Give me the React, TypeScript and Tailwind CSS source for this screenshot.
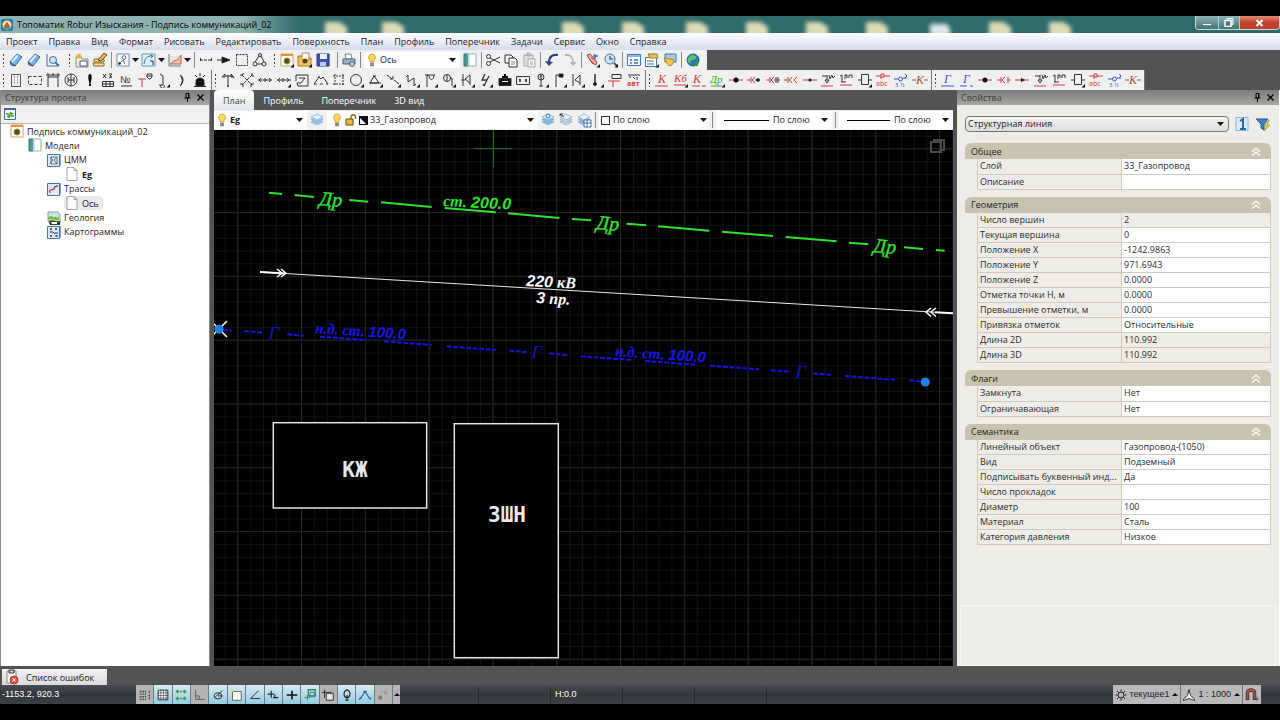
import { useState } from 'react'
import type { ReactNode } from 'react'

type Tool = [label: string, art: ReactNode]

const RED = '#d23a3a'
const BLUE = '#3c50c8'

function Icon({ children }: { children: ReactNode }) {
  return (
    <svg className="h-4 w-4 shrink-0" viewBox="0 0 16 16" fill="none" stroke="#333" strokeWidth="1">
      {children}
    </svg>
  )
}

const corner = <path d="M15 12v3.500h-3.500z" fill="#111" stroke="none" />

function Letter({ t, c, x = 2, y = 12, s = 12 }: { t: string; c: string; x?: number; y?: number; s?: number }) {
  return (
    <text x={x} y={y} fontSize={s} fill={c} stroke="none" fontStyle="italic" fontFamily="Liberation Serif, serif">
      {t}
    </text>
  )
}

function ToolButton({ tool }: { tool: Tool }) {
  return (
    <button type="button" aria-label={tool[0]} className="flex h-4 w-4 shrink-0 items-center justify-center hover:bg-sky-100">
      <Icon>{tool[1]}</Icon>
    </button>
  )
}

function Handle() {
  return (
    <svg className="h-4 w-1 shrink-0" viewBox="0 0 4 16" fill="#444">
      <path d="M1 2h1v2H1zM1 6h1v2H1zM1 10h1v2H1zM1 14h1v1H1z" />
    </svg>
  )
}

function Sep() {
  return <span className="mx-px h-4 w-px shrink-0 bg-[#8b8b8b]" />
}

function Caret() {
  return (
    <svg className="pointer-events-none h-[4px] w-[7px] shrink-0" viewBox="0 0 7 4" fill="#111">
      <path d="M0 0h7L3.500 4z" />
    </svg>
  )
}

const bulb = (
  <>
    <path d="M8 2a3.500 3.500 0 0 0-2 6.300V10h4V8.300A3.500 3.500 0 0 0 8 2z" fill="#ffd75e" stroke="#d9a62c" />
    <path d="M6.500 11h3v3h-3z" fill="#8a8a8a" stroke="#666" strokeWidth=".5" />
  </>
)

const eraser = (
  <>
    <path d="M2 10l7-8 5 3-7 9-4-1z" fill="#79b2e0" stroke="#2f6ea8" />
    <path d="M4 10l6-7" stroke="#d9edfb" strokeWidth="2" />
    <path d="M2 10l5 4" stroke="#1f4f80" />
  </>
)

const bookArt = (
  <>
    <path d="M2 2h4v12H2z" fill="#4d9a9a" stroke="#2f7272" />
    <path d="M6 2h8v12H6z" fill="#fff" stroke="#8fb0b8" />
    <path d="M7 3v10" stroke="#9fd0d0" />
  </>
)

const layers = (color: string) => (
  <>
    <path d="M2 10l6 3 6-3-6-3z" fill={color} stroke="#7fa9cf" strokeWidth=".7" />
    <path d="M2 7.500l6 3 6-3-6-3z" fill={color} stroke="#7fa9cf" strokeWidth=".7" />
    <path d="M2 5l6 3 6-3-6-3z" fill="#e4f2fb" stroke="#7fa9cf" strokeWidth=".7" />
  </>
)

const projectArt = (
  <>
    <path d="M2 2h12v12H2z" fill="#fff" stroke="#c9a860" />
    <path d="M2 2h12v2H2z" fill="#e5923b" stroke="none" />
    <circle cx="8" cy="9" r="3" fill="#5a4a1c" stroke="#8a9a3c" />
  </>
)

const fileTools: Tool[] = [
  ['Выделение', eraser],
  ['Снять выделение', eraser],
  ['Показать', <><path d="M3 2v12h11" stroke="#4a6c9c" /><circle cx="9" cy="8" r="3.500" fill="#cfe6f7" stroke="#3b6ea5" /><path d="M11.500 10.500L15 14" stroke="#3b6ea5" strokeWidth="2" /></>],
]

const folderTools: Tool[] = [
  ['Новый лист', <><path d="M2 5h5l1 2h6v8H2z" fill="#f6efc9" stroke="#7c8a9a" /><path d="M6 9h7v5H6z" fill="#fff" stroke="#557" /><path d="M5 1v6M2 4h6M3 2l4 4M7 2L3 6" stroke="#f0a92a" /></>],
  ['Правка листа', <><path d="M2 7h10v3H2zM1 11h11v3H2z" fill="#f6d890" stroke="#8a6a30" /><path d="M6 8l6-7 3 2-6 6z" fill="#f4b24a" stroke="#6a4a20" /></>],
]

const surfaceTools: Tool[] = [
  ['Точки', <><path d="M2 2h12v12H2z" fill="#fff" stroke="#6d8db5" /><circle cx="9" cy="5.500" r="1.800" stroke="#4c6d9c" /><path d="M8.500 7.500L5 11M8.500 8l1 4" stroke="#4c6d9c" /><circle cx="4.500" cy="11.500" r="1" fill="#333" /></>],
  ['Трасса', <><path d="M1 2h13v12H1z" fill="#dff1f8" stroke="#5b9fb8" /><path d="M3 12c1-6 3-8 8-8M9 3l3 1-2 2" stroke="#2c7f9c" /><path d="M9 9h3v4" stroke="#333" /></>],
  ['Профиль', <><path d="M2 2v12h12" stroke="#777" /><path d="M3 12l4-3 3-1 4-5v9z" fill="#f5c0b4" stroke="#c05a48" /><path d="M3 5h10M3 8h10" stroke="#bbb" strokeWidth=".5" /></>],
]

const drawTools: Tool[] = [
  ['Отрезок', <path d="M2 8h12M2.500 6v4M13.500 6v4" strokeDasharray="3 1" />],
  ['Стрелка', <><path d="M1 8h6" /><path d="M6 5l8 3-8 3z" fill="#111" /></>],
  ['Рамка', <path d="M2.500 2.500h11v11h-11z" strokeDasharray="2 1" />],
  ['Узлы', <><circle cx="8" cy="3" r="1.500" /><circle cx="3" cy="12" r="2" /><circle cx="12" cy="12" r="2" /><path d="M7 4L3 10M9 4l3 6M5 12h5" /></>],
]

const saveTools: Tool[] = [
  ['Новый проект', <>{projectArt}{corner}</>],
  ['Открыть проект', <><path d="M1 4h5l1 2h7v8H1z" fill="#f4c55c" stroke="#a97a1c" /><path d="M5 1h7v7H5z" fill="#fff" stroke="#b48a3c" /><circle cx="8" cy="9" r="2.500" fill="#5a4a1c" stroke="none" />{corner}</>],
  ['Сохранить', <><path d="M2 2h12v12H2z" fill="#3e52a8" stroke="#27357a" /><path d="M5 2h7v5H5z" fill="#e9eefb" stroke="none" /><path d="M5 10h6v4H5z" fill="#bcc8ec" stroke="none" /></>],
]

const clipTools: Tool[] = [
  ['Вырезать', <><circle cx="3.500" cy="4.500" r="2" /><circle cx="3.500" cy="11.500" r="2" /><path d="M5 6l10 5M5 10l10-5" /></>],
  ['Копировать', <><path d="M2 3h6l2 2v6H2z" fill="#f6f6f6" /><path d="M6 6h6l2 2v7H6z" fill="#fff" /><path d="M8 10h4M8 12h4" stroke="#888" /></>],
  ['Вставить', <g stroke="#a8a8a8"><path d="M3 3h9v11H3zM6 1h3v3H6z" fill="#e0e0e0" /><path d="M7 7h7v8H7z" fill="#f4f4f4" /><path d="M9 10h3M9 12h3" /></g>],
]

const undoTools: Tool[] = [
  ['Отменить', <><path d="M14 3C8 2 5 5 5 11" stroke="#23457e" strokeWidth="2.200" /><path d="M1 9l4 5 4-4z" fill="#23457e" stroke="none" /></>],
  ['Вернуть', <><path d="M3 3c6-1 8 3 8 8" stroke="#b4b4b4" strokeWidth="1.800" /><path d="M8 10l3 4 4-4z" fill="#b4b4b4" stroke="none" /></>],
]

const viewTools: Tool[] = [
  ['Панорама', <><path d="M2 3l3-1 7 8-1 3-4-2z" fill="#e9b0a4" stroke="#a4463c" /><path d="M4 7l5 5M6 5l5 4" stroke="#a4463c" /><path d="M10 2v5M8 4h5" stroke="#3b6ea5" strokeWidth="1.500" />{corner}</>],
  ['Масштаб', <><circle cx="7" cy="7" r="5" fill="#cfe3f2" stroke="#44739c" /><path d="M7 4v3h3" stroke="#44739c" strokeWidth="1.500" /><path d="M11 11l3 3" stroke="#2f5680" strokeWidth="2" />{corner}</>],
]

const windowTools: Tool[] = [
  ['Свойства', <><path d="M1.500 2.500h13v11h-13z" fill="#fff" stroke="#3b78b8" /><path d="M2 3h12v2H2z" fill="#8dbbe6" stroke="none" /><path d="M4 8h2M4 11h2M8 8h4M8 11h4" stroke="#3b78b8" strokeWidth="1.500" /></>],
  ['Параметры', <><path d="M1.500 5.500h11v9h-11z" fill="#fff" stroke="#3b78b8" /><path d="M4 2h9l1 4H6z" fill="#e9c25a" stroke="#a17a1c" /><path d="M3 9h7M3 12h7" stroke="#3b78b8" />{corner}</>],
  ['Выбор', <><path d="M3 2h11v8H3z" fill="#a9c8ea" stroke="#3b78b8" /><path d="M2 6l5 8 3-1 2-5-4-1z" fill="#f3c84c" stroke="#b58a1c" /></>],
]

const printer: Tool = ['Печать', <><path d="M4 2h6l1 5H5z" fill="#fff" stroke="#789" /><path d="M2 7h12v5H2z" fill="#9db0c8" stroke="#4d6284" /><circle cx="11" cy="12" r="2.500" fill="#b8cfe8" stroke="#4d6284" /></>]

const globe: Tool = ['Справка в сети', <><circle cx="8" cy="8" r="6" fill="#2b78c0" stroke="#1c5a94" /><path d="M4 5c3-3 6-2 7 0s-2 3-4 3-1 4-3 3-2-4 0-6z" fill="#5fc46a" stroke="none" /><path d="M9 10h4v4H9z" fill="#2f9c3c" stroke="none" /></>]

const row2a: Tool[] = [
  ['Здание', <path d="M3.500 2.500h9v12h-9zM6 5h1M9 5h1M6 8h1M9 8h1M6 11h1M9 11h1" stroke="#555" />],
  ['Контур', <path d="M1.500 4.500h13v8h-13z" strokeDasharray="3 2" />],
  ['Площадка', <><path d="M3 15V5h10v10M1 3h14M3 1v4M8 1v3M13 1v4" /></>],
  ['Колодец', <><circle cx="8" cy="8" r="6" /><path d="M8 2v12M5 5v6M11 5v6M5 8h6" /></>],
  ['Знак', <path d="M8 2c2.500 0 2 4 .5 10h-1C6 6 5.500 2 8 2zM7 12h2v2H7z" fill="#111" stroke="none" />],
  ['Таблица отметок', <><path d="M2.500 9.500h11v5h-11zM2 12h12M6 10v4M10 10v4" /><path d="M3 2l3 4M6 2L3 6M9 2h3l-2 2 2 1-3 1" /></>],
  ['Номер', <><text x="1" y="11" fontSize="10" fill="#333" stroke="none" fontFamily="Liberation Sans, sans-serif">№</text><path d="M2 14h11" /></>],
  ['Отметка', <><path d="M1 7h8M5 7v8" stroke={RED} /><path d="M10 2h5v3l-2 2h-1l-2-2zM10 4h5" /></>],
  ['Столб', <><path d="M8 4v9H4M6 13a2 2 0 1 0 3 0M5 2l3 2" />{corner}</>],
  ['Дуга', <path d="M6 3c4 2 4 8 0 11 3-4 3-7 0-11z" fill="#111" />],
  ['Маяк', <><path d="M4 14V9c0-4 8-4 8 0v5z" fill="#111" /><path d="M2 14.500h12M8 1v3M3 3l2 2M13 3l-2 2" /></>],
]

const row2b: Tool[] = [
  ['Узел', <path d="M8 15V3M2 5l3-3v3H2zM5 4h8M14 6l-3-4M11 2v3h3M7 14h2" />],
  ['Пересечение', <><path d="M3 3l10 10M13 3L3 13" strokeDasharray="3 1" /><path d="M1 3h3V1M13 1v3h2M1 12h3v3M12 15v-3h3" /></>],
  ['Линия связи', <path d="M1 8h14M4 6l-2 2 2 2M8 6v4M12 6l2 2-2 2" />],
  ['Линия', <><path d="M1 8h14M4 6l-2 2 2 2M7 6v4M11 6l2 2-2 2" />{corner}</>],
  ['Полигон', <path d="M2 3h12v11H4l-1-3M5 6h6l-4 5H3M2 3v6" />],
  ['Точки трассы', <path d="M1 12l5-7 2 2 2-2 5 7M1 12h3M7 12h3M5 5h2M13 12h2" />],
  ['Сетка', <path d="M4 2v12M12 2v12M2 4h12M2 12h12" strokeDasharray="2 1" />],
  ['Окружность', <><circle cx="7" cy="8" r="5.500" />{corner}</>],
  ['Треугольник', <><path d="M2 11l4-7 5 7zM1 11h12M5 4h3" />{corner}</>],
  ['Уклон', <><path d="M1 3l5 4M4 7h3V4M8 8l5 4" />{corner}</>],
  ['ЛЭП', <><path d="M3 3v7l6-4v8M3 3L1 5M9 14l2-2" />{corner}</>],
  ['Флаг', <><path d="M4 15V3h8M6 3c0 6 5 6 5 0M2 3h3" />{corner}</>],
  ['Выноска', <><circle cx="6" cy="6" r="3.500" /><path d="M6 3v6M9 6h2v8" />{corner}</>],
  ['Опора', <><path d="M3 2v12M10 3v10M10 3L5 7l5 4M1 8h4" />{corner}</>],
  ['Молния', <><path d="M7 2L4 8h5l-3 6M6 14l-1-2M11 4l-2 4" strokeWidth="1.300" />{corner}</>],
  ['Гидрант', <><path d="M2 6.500h12v7H2z" fill="#111" /><path d="M5 4h6v2H5zM7 2h2v2H7z" fill="#111" stroke="none" /><path d="M5 9.500h6" stroke="#fff" /></>],
  ['Щит', <><path d="M1.500 4.500h13v8h-13z" /><path d="M5 7v3M4 8h2M11 7v3M10 8h2" strokeWidth="1.500" /></>],
  ['Насос', <><circle cx="7" cy="5" r="3" fill="#ddd" /><path d="M7 3v11M5 14h4M6 4h2" />{corner}</>],
  ['Флажок', <><path d="M4 15V3h6v3" /><path d="M7 2h4v3H7z" fill="#111" />{corner}</>],
  ['Мачта', <><path d="M3 2v12M10 3v10M10 3L5 8l5 3" />{corner}</>],
  ['Репер', <><path d="M6 2v10" strokeWidth="1.500" /><circle cx="6" cy="12" r="1.500" fill="#111" />{corner}</>],
  ['Труба', <><path d="M5 2.500h9v4H5z" /><path d="M1 9h12M6 9v6" stroke={RED} /></>],
  ['Подпись', <><path d="M2 3h12M3 5h2M7 5l2 2M11 5v3" /><text x="1" y="14" fontSize="7" fontWeight="700" fill={RED} stroke="none">авт</text></>],
]

const manhole = <><path d="M1 8h14" stroke={RED} /><circle cx="8" cy="8" r="2.500" fill="#111" stroke="none" /></>
const rectTool = <><path d="M1 8h3M12 8h3M4.500 2.500h7v10h-7z" />{corner}</>
const pump = <><path d="M1 14h12" stroke={RED} /><path d="M2 4h5M7 3v5M5 8h4l-2 3zM9 3l1 4 2-4 1 3 2-2" /></>
const elev = <><path d="M2 13h12" stroke={RED} /><path d="M2 4l2-1v7M3 10h5M7 7V3h2v3M11 6V3h3v3" /></>
const pAbc = <><path d="M1 4h5M9 4h6M6 7V2h3v3H6" stroke={RED} /><text x="1" y="14" fontSize="7" fill={RED} stroke="none">abc</text></>
const chain = <><path d="M1 7h4M10 6h4M12 2l2 2-2 2" stroke={BLUE} /><circle cx="7.500" cy="7" r="2" stroke={BLUE} /><text x="2" y="15" fontSize="6" fill={BLUE} stroke="none">3 ½</text></>
const kDash = <><path d="M0 8h4M12 8h4" stroke="#a0522d" /><Letter t="К" c="#a0522d" x={4} s={12} /></>

const row2c: Tool[] = [
  ['Канализация', <><Letter t="К" c={RED} x={4} y={11} /><path d="M1 14h13" stroke={RED} /></>],
  ['Канализация бытовая', <><Letter t="Кб" c={RED} x={1} y={10} s={11} /><path d="M1 13h12" stroke={RED} />{corner}</>],
  ['Канализация ливневая', <><Letter t="К" c={RED} x={2} y={11} /><path d="M1 14h8M11 14h4" stroke={RED} /></>],
  ['Дренаж', <><Letter t="Др" c="#2db82d" x={0} y={11} s={11} /><path d="M1 14h11" stroke="#2db82d" />{corner}</>],
  ['Колодец на линии', manhole],
  ['Врезка', <><path d="M1 8h4M5 5v6M9 5L6 8l3 3M9 8h3" stroke={RED} /><circle cx="12" cy="8" r="1.800" fill="#111" stroke="none" /></>],
  ['Врезка справа', <><path d="M1 8h4M5 5v6M9 5L6 8l3 3M9 8h6" stroke={RED} /><path d="M11 5v6M13 5v6" /></>],
  ['Двойная врезка', <path d="M1 8h4M5 5v6M9 5L6 8l3 3M14 5l-3 3 3 3" stroke={RED} />],
  ['Узел линии', <><path d="M1 8h14" stroke={RED} /><circle cx="8" cy="8" r="1.500" fill="#111" stroke="none" /></>],
  ['Насосная', pump],
  ['Высота', elev],
  ['Камера', rectTool],
  ['Подпись сети', pAbc],
  ['Цепочка', chain],
  ['Разрыв', kDash],
]

const row2d: Tool[] = [
  ['Газопровод', <><Letter t="Г" c={BLUE} x={4} y={11} /><path d="M1 14h13" stroke={BLUE} /></>],
  ['Газопровод подземный', <><Letter t="Г" c={BLUE} x={4} y={11} /><path d="M1 14h7M11 14h3" stroke={BLUE} /></>],
  ['Колодец газа', manhole],
  ['Врезка газа', <><path d="M1 8h4M5 5v6M9 5L6 8l3 3M11 8h4" stroke={RED} /><path d="M12 5v6" stroke={RED} /></>],
  ['Узел газа', <><path d="M1 8h14" stroke={RED} /><path d="M7 6l4 2-4 2z" fill="#111" stroke="none" /></>],
  ['Станция', pump],
  ['Высота газа', elev],
  ['Камера газа', rectTool],
  ['Подпись газа', pAbc],
  ['Цепочка газа', chain],
  ['Разрыв газа', kDash],
]

const menu = ['Проект', 'Правка', 'Вид', 'Формат', 'Рисовать', 'Редактировать', 'Поверхность', 'План', 'Профиль', 'Поперечник', 'Задачи', 'Сервис', 'Окно', 'Справка']

const folderGlow = [336, 393, 573, 633, 697, 757, 817, 877, 1000, 1060]

function TitleBar() {
  return (
    <header className="relative flex h-[17px] items-stretch justify-between overflow-hidden bg-[#306a6a]">
      <svg className="absolute inset-0 h-full w-full" aria-hidden="true">
        <defs>
          <filter id="soft" x="-50%" y="-50%" width="200%" height="200%">
            <feGaussianBlur stdDeviation="2" />
          </filter>
          <linearGradient id="glow">
            <stop offset="0" stopColor="#8fb0b0" />
            <stop offset=".8" stopColor="#8fb3af" />
            <stop offset="1" stopColor="#306a6a" />
          </linearGradient>
        </defs>
        <rect width="300" height="17" fill="url(#glow)" />
        {folderGlow.map(x => (
          <path key={x} d={`M${x - 11} 6h14l8 5v10h-22z`} fill="#dcdcb8" filter="url(#soft)" />
        ))}
        <path d="M930 8h16l4 4v8h-20z" fill="#dfe8e8" filter="url(#soft)" />
      </svg>
      <div className="relative flex items-center gap-1 pl-px">
        <svg className="h-3 w-3" viewBox="0 0 12 12">
          <rect width="12" height="12" rx="2" fill="#2a78b4" />
          <circle cx="6" cy="6" r="4.500" fill="#f4e7a0" />
          <path d="M6 2.500L9.500 8h-7z" fill="#d8502c" />
          <path d="M3 9h6" stroke="#2f8c4c" strokeWidth="1.500" />
        </svg>
        <h1 className="whitespace-nowrap text-[9px] text-black">Топоматик Robur Изыскания - Подпись коммуникаций_02</h1>
      </div>
      <div className="relative flex h-[14px] overflow-hidden rounded-b border border-t-0 border-[#c8dcdc]">
        <button type="button" aria-label="Свернуть" className="flex w-[23px] items-center justify-center border-r border-[#b4cccc] bg-gradient-to-b from-[#8fb3b3] to-[#3f7474]">
          <svg className="h-2 w-3" viewBox="0 0 12 8"><path d="M1.500 4.500h9v2h-9z" fill="#fff" stroke="#445" strokeWidth=".5" /></svg>
        </button>
        <button type="button" aria-label="Развернуть" className="flex w-[21px] items-center justify-center border-r border-[#b4cccc] bg-gradient-to-b from-[#8fb3b3] to-[#3f7474]">
          <svg className="h-[9px] w-[10px]" viewBox="0 0 10 9"><path d="M3 .5h6v6H3z" fill="#9ab" stroke="#fff" /><path d="M1 2.500h6v6H1z" fill="#577" stroke="#fff" strokeWidth="1.500" /></svg>
        </button>
        <button type="button" aria-label="Закрыть" className="flex w-[39px] items-center justify-center bg-gradient-to-b from-[#dc8a78] via-[#c4402c] to-[#b8442c]">
          <svg className="h-2 w-[9px]" viewBox="0 0 9 8"><path d="M1.500 1l6 6M7.500 1l-6 6" stroke="#fff" strokeWidth="2" /></svg>
        </button>
      </div>
    </header>
  )
}

function Tools({ items }: { items: Tool[] }) {
  return <>{items.map(t => <ToolButton key={t[0]} tool={t} />)}</>
}

function MainToolbar() {
  return (
    <div className="flex bg-[#535353]">
      <div className="flex h-5 items-center gap-[2px] bg-[#f0f0f0] pl-[2px] pr-1.5">
        <Handle />
        <Tools items={fileTools} />
        <span className="w-1" />
        <Handle />
        <Tools items={folderTools} />
        <Sep />
        {surfaceTools.map(t => (
          <div key={t[0]} className="flex items-center gap-px">
            <ToolButton tool={t} />
            <Caret />
          </div>
        ))}
        <Sep />
        <Tools items={drawTools} />
        <span className="w-px" />
        <Handle />
        <Tools items={saveTools} />
        <span className="w-px" />
        <Sep />
        <ToolButton tool={printer} />
        <Sep />
        <label className="flex h-4 w-[96px] items-center bg-white pr-1">
          <Icon>{bulb}</Icon>
          <select aria-label="Трасса" className="h-4 flex-1 appearance-none text-[9px] leading-4 outline-none">
            <option>Ось</option>
          </select>
          <Caret />
        </label>
        <ToolButton tool={['Модель', bookArt]} />
        <Sep />
        <Tools items={clipTools} />
        <Sep />
        <Tools items={undoTools} />
        <Sep />
        <Tools items={viewTools} />
        <Sep />
        <Tools items={windowTools} />
        <Sep />
        <ToolButton tool={globe} />
      </div>
    </div>
  )
}

function SignToolbar() {
  const group = 'flex h-5 items-center justify-between bg-[#f0f0f0] pl-[2px] pr-[3px] border-r border-[#777]'
  return (
    <div className="flex bg-[#535353]">
      <div className={group + ' w-[212px]'}><Handle /><Tools items={row2a} /></div>
      <div className={group + ' w-[434px]'}><Handle /><Tools items={row2b} /></div>
      <div className={group + ' w-[286px]'}><Handle /><Tools items={row2c} /></div>
      <div className={group + ' w-[213px]'}><Handle /><Tools items={row2d} /></div>
    </div>
  )
}

function PanelHead({ title }: { title: string }) {
  return (
    <div className="flex h-[15px] items-center justify-between bg-gradient-to-b from-[#7c7c7c] to-[#a6a6a6] pl-1 pr-1">
      <h2 className="text-[9px] text-[#3d3d3d]">{title}</h2>
      <div className="flex items-center gap-1">
        <button type="button" aria-label="Закрепить">
          <svg className="h-[9px] w-[9px]" viewBox="0 0 9 9" fill="none" stroke="#000"><path d="M3 .5h3v4.500H3zM1.500 5h6M4.500 5v4M5.500 1v4" /></svg>
        </button>
        <button type="button" aria-label="Закрыть панель">
          <svg className="h-[9px] w-[9px]" viewBox="0 0 9 9" stroke="#000" strokeWidth="1.300"><path d="M1.500 1.500l6 6M7.500 1.500l-6 6" /></svg>
        </button>
      </div>
    </div>
  )
}

const modelFrame = <><path d="M4 2h11v11l-2 2V4H2z" fill="#7fa5cc" stroke="none" /><path d="M1.500 2.500h12v12h-12z" fill="#dcebfa" stroke="#4474a8" /></>
const sheet = <path d="M3 1.500h7l3 3v10H3zM10 1.500v3h3" fill="#fdfdfd" stroke="#a4a4a4" />

const tree: { label: string; pad: string; art: ReactNode; bold?: boolean; active?: boolean }[] = [
  { label: 'Подпись коммуникаций_02', pad: 'pl-[8px]', art: projectArt },
  { label: 'Модели', pad: 'pl-[26px]', art: bookArt },
  { label: 'ЦММ', pad: 'pl-[45px]', art: <>{modelFrame}<path d="M4 5l3 3-3 4M11 5L8 8l3 4M5 5h6v7H5z" stroke="#456" strokeWidth=".8" /></> },
  { label: 'Eg', pad: 'pl-[63px]', art: sheet, bold: true },
  { label: 'Трассы', pad: 'pl-[45px]', art: <>{modelFrame}<path d="M4 12c-2-4 3-3 4-4s-1-3 4-3" stroke="#c8283c" strokeWidth="1.300" /></> },
  { label: 'Ось', pad: 'pl-[63px]', art: sheet, active: true },
  { label: 'Геология', pad: 'pl-[45px]', art: <><path d="M2 2h10l2 3v9H4L2 11z" fill="#cfe0ea" stroke="#8aa0ac" /><path d="M2 7c4-2 6 1 11 0v3c-4 1-7-2-11 0z" fill="#7cbf3c" stroke="none" /><path d="M3 11c4-2 6 1 11 0v4H4z" fill="#33421c" stroke="none" /><path d="M5 12h6v2H6z" fill="#fff" stroke="none" /></> },
  { label: 'Картограммы', pad: 'pl-[45px]', art: <>{modelFrame}<path d="M4 5h2M9 5h2M4 8h3M9 9h3M4 12h2M9 12h2M5 4v2M10 4v2M7 8l2 2M5 11v2M11 11v2" stroke="#234" /></> },
]

function ProjectPanel() {
  return (
    <aside className="flex w-[210px] shrink-0 flex-col border-x border-[#8a8a8a] bg-white">
      <PanelHead title="Структура проекта" />
      <div className="flex h-[19px] items-center border-b border-[#b4b4b4] bg-[#f0f0f0] pl-px">
        <ToolButton tool={['Обновить', <><path d="M2.500 3.500h11v10h-11z" fill="#fff" stroke="#3b6ea5" /><path d="M2 2h12v2H2z" fill="#3b6ea5" stroke="none" /><path d="M4 8h6M8 6l3 2M12 10H6M8 12l-3-2" stroke="#3f9c2c" strokeWidth="1.500" /></>]} />
      </div>
      <ul className="flex h-[115px] flex-col justify-between">
        {tree.map(n => (
          <li key={n.label} className={`flex h-[14px] items-center text-[9px] ${n.pad}`}>
            <button
              type="button"
              className={`flex h-[14px] items-center gap-0.5 rounded-sm pr-1 ${n.active ? 'bg-[#e9e9e9]' : ''} ${n.bold ? 'font-bold' : ''}`}
            >
              <span className="flex h-[14px] items-center"><Icon>{n.art}</Icon></span>
              {n.label}
            </button>
          </li>
        ))}
      </ul>
    </aside>
  )
}

const tabs = ['План', 'Профиль', 'Поперечник', '3D вид']

function LineSelect({ label, width }: { label: string; width: string }) {
  return (
    <label className={`flex h-[18px] items-center gap-1 bg-white pl-2 pr-1 ${width}`}>
      <span className="h-px flex-1 bg-black" />
      <select aria-label={label} className="h-4 w-[44px] appearance-none text-[9px] leading-4 outline-none">
        <option>По слою</option>
      </select>
      <Caret />
    </label>
  )
}

function LayerBar() {
  return (
    <div className="flex h-5 items-center gap-[2px] bg-[#f0f0f0]">
      <label className="flex h-[18px] w-[93px] items-center bg-white pr-1">
        <Icon>{bulb}</Icon>
        <select aria-label="Поверхность" className="h-4 flex-1 appearance-none text-[9px] font-bold leading-4 outline-none">
          <option>Eg</option>
        </select>
        <Caret />
      </label>
      <ToolButton tool={['Слои поверхности', layers('#9cc9ea')]} />
      <label className="flex h-[18px] min-w-0 flex-1 items-center bg-white pl-[2px] pr-1">
        <Icon>{bulb}</Icon>
        <svg className="h-3 w-3" viewBox="0 0 12 12" fill="none"><path d="M6 5V3a2 2 0 0 1 4.500 0v2" stroke="#8a6a20" strokeWidth="1.300" /><path d="M1 5h7v6H1z" fill="#f0b83c" stroke="#6a4a10" /></svg>
        <svg className="ml-0.5 h-[9px] w-[9px]" viewBox="0 0 9 9"><path d="M0 0h9v9H0z" fill="#111" /><path d="M1 8V2l6 6z" fill="#fff" /></svg>
        <select aria-label="Слой" className="ml-0.5 h-4 flex-1 appearance-none text-[9px] leading-4 outline-none">
          <option>33_Газопровод</option>
        </select>
        <Caret />
      </label>
      <ToolButton tool={['Диспетчер слоёв', <>{layers('#8ab8e4')}<circle cx="8" cy="4" r="2" stroke="#4474a8" /></>]} />
      <ToolButton tool={['Предыдущий слой', <>{layers('#d4d4d4')}<path d="M6 5L2 2M2 4V2h3" /></>]} />
      <ToolButton tool={['Слои', <>{layers('#8ab8e4')}<path d="M8 8h7v7H8zM8 11h7M11 8v7" fill="#fff" stroke="#4474a8" /></>]} />
      <Sep />
      <label className="flex h-[18px] w-[110px] items-center bg-white pl-[2px] pr-[2px]">
        <span className="h-[9px] w-[9px] border border-[#333] bg-white" />
        <select aria-label="Цвет" className="ml-[3px] h-4 flex-1 appearance-none text-[9px] leading-4 outline-none">
          <option>По слою</option>
        </select>
        <Caret />
      </label>
      <Sep />
      <LineSelect label="Тип линии" width="w-[116px]" />
      <Sep />
      <LineSelect label="Толщина линии" width="w-[114px]" />
    </div>
  )
}

const drainDashes =
  'M55 62.700L68 64M80.700 65L99.700 67M135.300 70L154.300 71.700M167 72.300L217.700 77M230.700 78L281.700 82.300M294 83.300L345.300 88M358 89L377 90.300M412.700 93.700L432 95.300M444 96.300L495.300 100.700M508 101.700L559 106M571.700 107L622.700 111.300M635 112.700L654.300 114.300M690 117.300L709 119M722 120L730.700 120.700'

const gasDashes =
  'M8.700 200L17.700 200.300M30.300 201L49.300 202.700M73.300 204.300L90 205.700M106 206.700L152.700 210M170 211.300L217.700 215M232.700 216.300L281.700 220M295.300 220.700L312.700 222M335.300 223.300L354.300 225.300M366.700 226.300L417.700 230M431 231L481 234.700M496 235.700L545 239.300M556.700 240.300L576.700 241.700M599.300 243.300L617.700 245M631 246L681 249.700M695.300 250.300L707.700 251.300'

function Drawing() {
  const serif = 'Liberation Serif, serif'
  const sans = 'Liberation Sans, sans-serif'
  return (
    <svg className="absolute inset-0 h-full w-full" aria-label="Чертёж плана">
      <defs>
        <pattern id="minor" width="12.760" height="12.760" patternUnits="userSpaceOnUse" x="23.500" y="18.500">
          <path d="M0 .5h12.760M.5 0v12.760" stroke="#111114" fill="none" />
        </pattern>
        <pattern id="major" width="63.800" height="63.800" patternUnits="userSpaceOnUse" x="23.200" y="18.200">
          <path d="M0 .5h63.800M.5 0v63.800" stroke="#242428" fill="none" />
        </pattern>
      </defs>
      <rect width="100%" height="100%" fill="url(#minor)" />
      <rect width="100%" height="100%" fill="url(#major)" />

      <path d="M260 18.500h38M279.500 0v37.500" stroke="#1c6a1c" />
      <path d="M717 12h10v10h-10zM720 12v-2h10v10h-3" stroke="#4a4a4a" strokeWidth="2" fill="none" />

      <path d={drainDashes} stroke="#2fe22f" strokeWidth="2" fill="none" />
      <g fill="#2fe22f" stroke="#2fe22f" strokeWidth=".4" fontFamily={serif} fontStyle="italic" fontSize="20">
        <text transform="translate(105 75) rotate(5)">Др</text>
        <text transform="translate(382 99) rotate(5)">Др</text>
        <text transform="translate(659 122) rotate(5)">Др</text>
      </g>
      <text transform="translate(229 76) rotate(3)" fill="#2fe22f" fontSize="16" fontStyle="italic" fontWeight="700">
        <tspan fontFamily={serif}>ст.</tspan> <tspan fontFamily={sans}>200.0</tspan>
      </text>

      <path d="M46 142L739 183.300" stroke="#e8e8e8" fill="none" />
      <path d="M46 142l26 1.500M721 182.300l18 1" stroke="#fff" strokeWidth="2" />
      <path d="M63 139l5 4.200-5 3.800M67 139l5 4.200-5 3.800M717 178l-5 4 5 4.500M722 178l-5 4 5 4.500" stroke="#fff" strokeWidth="1.500" fill="none" />
      <g fill="#fff" fontSize="16" fontStyle="italic" fontWeight="700">
        <text transform="translate(312 156) rotate(3)"><tspan fontFamily={sans}>220</tspan> <tspan fontFamily={serif}>кВ</tspan></text>
        <text transform="translate(322 173) rotate(3)"><tspan fontFamily={sans}>3</tspan> <tspan fontFamily={serif}>пр.</tspan></text>
      </g>

      <path d={gasDashes} stroke="#1414d8" strokeWidth="2" strokeDasharray="5 1.500" fill="none" />
      <g fill="#1212b4" fontFamily={serif} fontStyle="italic" fontSize="19">
        <text transform="translate(54 209) rotate(4)">Г</text>
        <text transform="translate(317 228) rotate(4)">Г</text>
        <text transform="translate(581 248) rotate(4)">Г</text>
      </g>
      <g fill="#1616ea" fontSize="15" fontStyle="italic" fontWeight="700">
        <text transform="translate(101 203) rotate(4)"><tspan fontFamily={serif}>н.д. ст.</tspan> <tspan fontFamily={sans}>100.0</tspan></text>
        <text transform="translate(401 226) rotate(4)"><tspan fontFamily={serif}>н.д. ст.</tspan> <tspan fontFamily={sans}>100.0</tspan></text>
      </g>
      <path d="M-3 191l16 16M13 191l-16 16" stroke="#fff" strokeWidth="1.500" />
      <circle cx="5" cy="199.300" r="4.500" fill="#1e82e6" />
      <circle cx="711.300" cy="252" r="4.500" fill="#1e82e6" />

      <g fill="#000" stroke="#e4e4e4" strokeWidth="1.500">
        <rect x="59.300" y="292.700" width="153.400" height="85.300" />
        <rect x="240.300" y="293.700" width="104" height="234" />
      </g>
      <g fill="#e8e8e8" fontFamily="DejaVu Sans Mono, monospace" fontWeight="700" fontSize="21" textAnchor="middle">
        <text x="141" y="347">КЖ</text>
        <text x="293" y="392">ЗШН</text>
      </g>
    </svg>
  )
}

function Workspace() {
  const [active, setActive] = useState('План')
  return (
    <main className="flex min-w-0 flex-1 flex-col">
      <nav className="flex h-5 text-[9px]">
        {tabs.map(t => (
          <button
            key={t}
            type="button"
            onClick={() => setActive(t)}
            className={`px-[9px] ${t === active ? 'rounded-t-sm bg-gradient-to-b from-white to-[#dfe5ec] text-[#444]' : 'text-white'}`}
          >
            {t}
          </button>
        ))}
      </nav>
      <LayerBar />
      <div className="relative flex-1 overflow-hidden bg-black">
        <Drawing />
      </div>
    </main>
  )
}

type Row = [name: string, value: string, locked?: boolean]

const sections: { title: string; rows: Row[] }[] = [
  { title: 'Общее', rows: [['Слой', '33_Газопровод'], ['Описание', '']] },
  {
    title: 'Геометрия',
    rows: [
      ['Число вершин', '2', true],
      ['Текущая вершина', '0'],
      ['Положение X', '-1242.9863'],
      ['Положение Y', '971.6943'],
      ['Положение Z', '0.0000'],
      ['Отметка точки Н, м', '0.0000'],
      ['Превышение отметки, м', '0.0000'],
      ['Привязка отметок', 'Относительные'],
      ['Длина 2D', '110.992', true],
      ['Длина 3D', '110.992', true],
    ],
  },
  { title: 'Флаги', rows: [['Замкнута', 'Нет'], ['Ограничавающая', 'Нет']] },
  {
    title: 'Семантика',
    rows: [
      ['Линейный объект', 'Газопровод-(1050)'],
      ['Вид', 'Подземный'],
      ['Подписывать буквенный инд...', 'Да'],
      ['Число прокладок', ''],
      ['Диаметр', '100'],
      ['Материал', 'Сталь'],
      ['Категория давления', 'Низкое'],
    ],
  },
]

function PropertySection({ title, rows }: { title: string; rows: Row[] }) {
  return (
    <section className="mb-[7px]">
      <button type="button" className="flex h-4 w-full items-center justify-between rounded-t-md bg-[#c7c3b1] pl-[6px] pr-[10px] text-[9px] text-[#222]">
        {title}
        <svg className="h-[9px] w-[10px]" viewBox="0 0 10 9" fill="none" stroke="#fff" strokeWidth="1.300"><path d="M1 4.500l4-3.500 4 3.500M1 8.500L5 5l4 3.500" /></svg>
      </button>
      <div className="pl-3">
        <table className="w-full table-fixed border-collapse text-left text-[9px] leading-[14px] text-[#2c2c2c]">
          <tbody>
            {rows.map(([name, value, locked]) => (
              <tr key={name} className="h-[15px] border-b border-[#cfccbd]">
                <th scope="row" className="w-[144px] whitespace-nowrap border-l border-[#cfccbd] p-0 pl-[2px] font-normal">{name}</th>
                <td className={`border-x border-[#cfccbd] p-0 pl-[2px] ${locked ? '' : 'bg-white'}`}>{value}</td>
              </tr>
            ))}
          </tbody>
        </table>
      </div>
    </section>
  )
}

function PropertiesPanel() {
  return (
    <aside className="flex w-[323px] shrink-0 flex-col border-r border-white bg-[#edece6]">
      <PanelHead title="Свойства" />
      <div className="flex flex-1 flex-col pl-2 pr-[8px] pt-[11px]">
        <div className="mb-[11px] flex items-center gap-[5px]">
          <label className="flex h-4 w-[269px] items-center rounded-sm border border-[#777] bg-gradient-to-b from-[#f4f4f4] to-[#dcdcdc] pl-[2px] pr-1">
            <select aria-label="Тип объекта" className="h-[14px] flex-1 appearance-none text-[9px] leading-[14px] outline-none">
              <option>Структурная линия</option>
            </select>
            <Caret />
          </label>
          <ToolButton tool={['Добавлять в выбор', <><path d="M2 1.500h12v13H2z" fill="#dcebfa" stroke="#8ab4dc" /><path d="M6 5l3-2v10M6 13h6" stroke="#1f6ab4" strokeWidth="2" /></>]} />
          <ToolButton tool={['Быстрый выбор', <><path d="M1 3h12L9 8v6l-3-2V8z" fill="#3b86c4" stroke="#1f5a94" /><path d="M14 4l-5 6h3l-3 5 6-6h-3z" fill="#f4dc4c" stroke="#9a8a1c" strokeWidth=".6" /></>]} />
        </div>
        {sections.map(s => <PropertySection key={s.title} {...s} />)}
      </div>
      <div className="m-[3px] mb-0 h-[61px] border border-[#f8f8f4]" />
    </aside>
  )
}

const snaps: { label: string; on: boolean; art: ReactNode }[] = [
  { label: 'Шаг', on: false, art: <path d="M2 4h8M2 7h8M2 10h8M2 13h8M13 3v3M13 8v5" strokeDasharray="1 1" strokeWidth="1.500" /> },
  { label: 'Сетка', on: true, art: <><path d="M2.500 2.500h11v11h-11z" fill="#fff" /><path d="M5.500 2v12M8.500 2v12M11.500 2v12M2 5.500h12M2 8.500h12M2 11.500h12" strokeWidth=".6" /></> },
  { label: 'Привязка к сетке', on: true, art: <path d="M2 4h4M4 2v4M10 4h4M12 2v4M2 12h4M4 10v4M10 12h4M12 10v4M7 4h2M7 12h2" stroke="#2f9c3c" strokeWidth="1.500" /> },
  { label: 'Орто', on: false, art: <path d="M3 2v11h11M3 9h4v4" stroke="#555" /> },
  { label: 'Полярное', on: true, art: <><ellipse cx="8" cy="9" rx="4.500" ry="3.500" /><path d="M5 10l8-7M8 9h5" /></> },
  { label: 'Объектная', on: true, art: <><path d="M4 4h10v10H4z" fill="#fff" stroke="#555" /><circle cx="4" cy="3" r="1.500" fill="#c4e04c" stroke="none" /></> },
  { label: 'Угол', on: true, art: <path d="M12 3L3 12h11" /> },
  { label: 'Отслеживание', on: true, art: <path d="M2 7h7M6 3v8M8 11h6M10 7v4" strokeWidth="1.300" /> },
  { label: 'Перекрестие', on: true, art: <path d="M2 8h12M8 3v10" stroke="#111" strokeWidth="1.800" /> },
  { label: 'Слияние', on: true, art: <><path d="M6 2h8v7H6z" stroke="#2f8c5c" strokeWidth="1.500" /><path d="M8 5h5v5H8z" stroke="#3b6ea5" /><path d="M2 11h6M5 8v6" stroke="#2f8c5c" /></> },
  { label: 'Рамка выбора', on: false, art: <><path d="M1 5h11M4 2v9" /><path d="M6 6h8v8H6z" fill="#e4e4e4" /></> },
  { label: 'Дерево', on: true, art: <path d="M8 2c5 2 4 9 0 9S3 4 8 2zM8 8v6M6 14h4" strokeWidth="1.300" /> },
  { label: 'Кривая', on: true, art: <><path d="M2 12c3-1 4-7 6-7s3 6 6 7" stroke="#2f6ea8" strokeWidth="1.300" /><path d="M1 13l3-2M6 4h4M13 11l2 2" stroke="#2f6ea8" strokeWidth="2" /></> },
  { label: 'Отметка курсора', on: false, art: <><circle cx="5" cy="11" r="2" fill="#a07070" stroke="#857070" /><path d="M6 4h2M10 3v4M12 3v4" stroke="#888" /></> },
]

function UpMark() {
  return <svg className="h-[3px] w-[6px] shrink-0" viewBox="0 0 6 3"><path d="M0 3h6L3 0z" fill="#111" /></svg>
}

function StatusBar() {
  return (
    <footer className="flex h-[19px] items-stretch bg-gradient-to-b from-[#484c54] via-[#34363a] to-[#3c4046] font-['Liberation_Sans',sans-serif] text-[9px] text-white">
      <p className="flex w-[136px] items-center pl-[2px]">-1153.2, 920.3</p>
      <div className="flex w-[257px]">
        {snaps.map(s => (
          <button
            key={s.label}
            type="button"
            aria-label={s.label}
            aria-pressed={s.on}
            className={`flex flex-1 items-center justify-center border-r border-[#6f7c84] ${s.on ? 'bg-gradient-to-b from-[#d4eaf2] to-[#96cbe0]' : 'bg-[#b4b4b6]'}`}
          >
            <svg className="h-[14px] w-[14px] shrink-0" viewBox="0 0 16 16" fill="none" stroke="#222">{s.art}</svg>
          </button>
        ))}
      </div>
      <button type="button" aria-label="Настройка панели" className="flex w-[7px] items-center justify-center bg-[#b4b4b6]"><UpMark /></button>
      <div className="flex flex-1 items-center">
        <span className="h-4 w-[79px] border-r border-[#26282c]" />
        <span className="h-4 w-[72px] border-r border-[#26282c]" />
        <span className="flex h-4 w-[72px] items-center border-r border-[#26282c] pl-1">H:0.0</span>
        <span className="h-4 w-[72px] border-r border-[#26282c]" />
        <span className="h-4 w-[72px] border-r border-[#26282c]" />
      </div>
      <div className="mr-[19px] flex text-[#222]">
        <button type="button" className="flex items-center gap-[3px] border-r border-[#777] bg-[#b9b9bb] px-[2px]">
          <svg className="h-3 w-3" viewBox="0 0 12 12" fill="none" stroke="#222"><circle cx="6" cy="6" r="3" /><path d="M6 .5v2M6 9.500v2M.5 6h2M9.500 6h2M2 2l1.500 1.500M10 2L8.500 3.500M2 10l1.500-1.500M10 10L8.500 8.500" /></svg>
          текущее1
          <UpMark />
        </button>
        <button type="button" className="flex items-center gap-[3px] border-r border-[#777] bg-[#b9b9bb] px-[2px]">
          <svg className="h-3 w-3" viewBox="0 0 12 12" fill="#fff" stroke="#333"><path d="M6 .5L7.500 6.500l4 3.500v1.500L6 9.500.5 11.500V10l4-3.500z" /></svg>
          1 : 1000
          <UpMark />
        </button>
        <button type="button" aria-label="Магнит" className="flex w-[18px] items-center justify-center bg-[#b9b9bb]">
          <svg className="h-[14px] w-[14px]" viewBox="0 0 14 14" fill="none"><path d="M2.500 12V5c0-4 7-4 7 0v7" stroke="#333" strokeWidth="3.500" /><path d="M2.500 11V5c0-4 7-4 7 0v6" stroke="#b84c44" strokeWidth="2" /><circle cx="12" cy="11" r="1" stroke="#444" /></svg>
        </button>
      </div>
    </footer>
  )
}

export default function App() {
  return (
    <div className="flex min-h-screen flex-col bg-black py-4 font-['Open_Sans','Noto_Sans',sans-serif] leading-none text-[#1c1c1c]">
      <TitleBar />
      <nav className="flex h-[17px] items-center gap-[11px] bg-gradient-to-b from-white to-[#d6dcee] px-[6px] text-[9px]">
        {menu.map(m => <button key={m} type="button">{m}</button>)}
      </nav>
      <MainToolbar />
      <SignToolbar />
      <div className="flex flex-1 gap-1 bg-[#535353]">
        <ProjectPanel />
        <Workspace />
        <PropertiesPanel />
      </div>
      <div className="flex h-[19px] items-end bg-[#535353] pl-[2px]">
        <button type="button" className="flex h-4 w-[105px] items-center gap-1.5 bg-gradient-to-b from-[#f4f2f4] to-[#dcd8dc] pl-[2px] text-[9px]">
          <Icon><path d="M3 2h9v12H3z" fill="#fff" stroke="#888" /><path d="M5 1h5v3H5z" fill="#ccc" /><circle cx="10" cy="11" r="4" fill="#dc5a3c" stroke="#a43c24" /><path d="M8.500 9.500l3 3M11.500 9.500l-3 3" stroke="#fff" /></Icon>
          Список ошибок
        </button>
      </div>
      <StatusBar />
    </div>
  )
}
